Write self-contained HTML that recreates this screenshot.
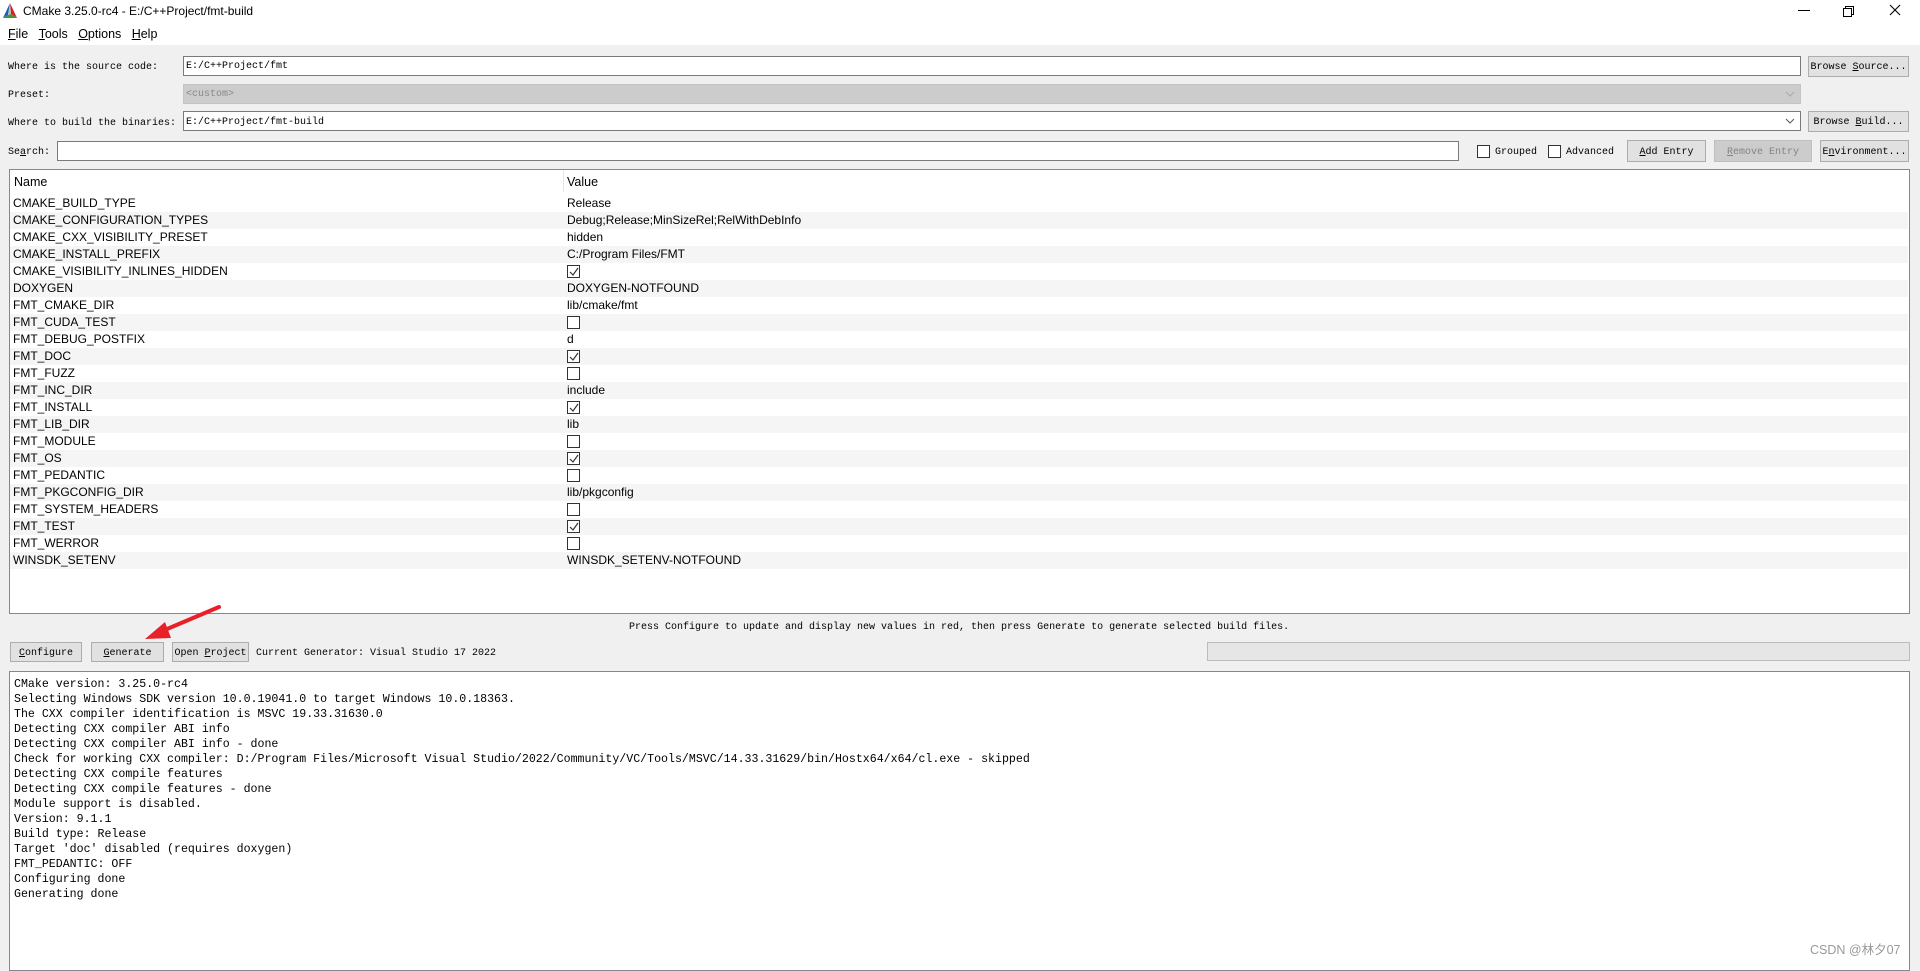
<!DOCTYPE html>
<html><head><meta charset="utf-8"><style>
*{margin:0;padding:0;box-sizing:border-box}
body{width:1920px;height:963px;position:relative;background:#f0f0f0;overflow:hidden;font-family:"Liberation Sans",sans-serif}
.a{position:absolute;white-space:pre}
.m{font-family:"Liberation Mono","Noto Sans CJK SC",monospace;font-size:10px;color:#000}
.inp{position:absolute;background:#fff;border:1px solid #7a7a7a}
.btn{position:absolute;background:#e1e1e1;border:1px solid #adadad;font-family:"Liberation Mono",monospace;font-size:10px;text-align:center;color:#000}
.row{position:absolute;left:10px;width:1898px;height:17px;font-size:12px;line-height:17px;color:#000}
.row.g{background:#f5f5f5}
.row span{position:absolute}
.cb{position:absolute;width:13px;height:13px;border:1px solid #333;background:#fff;top:2px;left:557px}
.cb svg{position:absolute;left:1px;top:1px}
.out{font-family:"Liberation Mono",monospace;font-size:11.6px;line-height:15px;color:#000}
u{text-decoration:underline}
</style></head><body>
<div class="a" style="left:0;top:0;width:1920px;height:45px;background:#fff"></div>
<svg class="a" style="left:2px;top:2px" width="16" height="18" viewBox="0 0 16 18"><polygon points="8,1 1,16 6,13" fill="#1e5fb5"/><polygon points="8,1 15,16 9,12" fill="#d42020"/><polygon points="1,16 15,16 9,12 6,13" fill="#3a9a3a"/><polygon points="6,13 9,12 8,1" fill="#bbb"/></svg>
<div class="a" style="left:23px;top:4px;font-size:12px;color:#000">CMake 3.25.0-rc4 - E:/C++Project/fmt-build</div>
<div class="a" style="left:1798px;top:10px;width:12px;height:1px;background:#000"></div>
<div class="a" style="left:1845px;top:6px;width:9px;height:9px;border:1px solid #000;background:#fff"></div>
<div class="a" style="left:1843px;top:8px;width:9px;height:9px;border:1px solid #000;background:#fff"></div>
<svg class="a" style="left:1889px;top:4px" width="12" height="12"><path d="M1 1L11 11M11 1L1 11" stroke="#000" stroke-width="1.1"/></svg>
<div class="a" style="left:8px;top:27px;font-size:12.5px"><u>F</u>ile&nbsp;&nbsp;&nbsp;<u>T</u>ools&nbsp;&nbsp;&nbsp;<u>O</u>ptions&nbsp;&nbsp;&nbsp;<u>H</u>elp</div>

<div class="a m" style="left:8px;top:62px">Where is the source code:</div>
<div class="inp" style="left:183px;top:56px;width:1618px;height:20px"></div>
<div class="a m" style="left:186px;top:61px">E:/C++Project/fmt</div>
<div class="btn" style="left:1808px;top:56px;width:101px;height:21px;line-height:21px">Browse <u>S</u>ource...</div>

<div class="a m" style="left:8px;top:90px">Preset:</div>
<div class="a" style="left:183px;top:84px;width:1618px;height:20px;background:#cccccc;border:1px solid #c4c4c4"></div>
<div class="a m" style="left:186px;top:89px;color:#888">&lt;custom&gt;</div>
<svg class="a" style="left:1785px;top:91px" width="10" height="6"><path d="M1 1L5 5L9 1" stroke="#aaa" fill="none"/></svg>

<div class="a m" style="left:8px;top:118px">Where to build the binaries:</div>
<div class="inp" style="left:183px;top:111px;width:1618px;height:20px"></div>
<div class="a m" style="left:186px;top:117px">E:/C++Project/fmt-build</div>
<svg class="a" style="left:1785px;top:118px" width="10" height="6"><path d="M1 1L5 5L9 1" stroke="#555" fill="none"/></svg>
<div class="btn" style="left:1808px;top:111px;width:101px;height:21px;line-height:21px">Browse <u>B</u>uild...</div>

<div class="a m" style="left:8px;top:147px">Se<u>a</u>rch:</div>
<div class="inp" style="left:57px;top:141px;width:1402px;height:20px"></div>
<div class="a" style="left:1477px;top:145px;width:13px;height:13px;border:1px solid #333;background:#fff"></div>
<div class="a m" style="left:1495px;top:147px">Grouped</div>
<div class="a" style="left:1548px;top:145px;width:13px;height:13px;border:1px solid #333;background:#fff"></div>
<div class="a m" style="left:1566px;top:147px">Advanced</div>
<div class="btn" style="left:1627px;top:140px;width:79px;height:22px;line-height:23px"><u>A</u>dd Entry</div>
<div class="btn" style="left:1714px;top:140px;width:98px;height:22px;line-height:23px;background:#cccccc;border-color:#bfbfbf;color:#838383"><u>R</u>emove Entry</div>
<div class="btn" style="left:1820px;top:140px;width:89px;height:22px;line-height:23px">E<u>n</u>vironment...</div>

<div class="a" style="left:9px;top:169px;width:1901px;height:445px;background:#fff;border:1px solid #828790"></div>
<div class="a" style="left:14px;top:175px;font-size:12.5px">Name</div>
<div class="a" style="left:563px;top:170px;width:1px;height:22px;background:#e5e5e5"></div>
<div class="a" style="left:567px;top:175px;font-size:12.5px">Value</div>

<div class="row" style="top:195px"><span style="left:3px">CMAKE_BUILD_TYPE</span><span style="left:557px">Release</span></div>
<div class="row g" style="top:212px"><span style="left:3px">CMAKE_CONFIGURATION_TYPES</span><span style="left:557px">Debug;Release;MinSizeRel;RelWithDebInfo</span></div>
<div class="row" style="top:229px"><span style="left:3px">CMAKE_CXX_VISIBILITY_PRESET</span><span style="left:557px">hidden</span></div>
<div class="row g" style="top:246px"><span style="left:3px">CMAKE_INSTALL_PREFIX</span><span style="left:557px">C:/Program Files/FMT</span></div>
<div class="row" style="top:263px"><span style="left:3px">CMAKE_VISIBILITY_INLINES_HIDDEN</span><div class="cb"><svg width="10" height="10"><path d="M1 5L4 8L9 1" stroke="#333" fill="none" stroke-width="1.2"/></svg></div></div>
<div class="row g" style="top:280px"><span style="left:3px">DOXYGEN</span><span style="left:557px">DOXYGEN-NOTFOUND</span></div>
<div class="row" style="top:297px"><span style="left:3px">FMT_CMAKE_DIR</span><span style="left:557px">lib/cmake/fmt</span></div>
<div class="row g" style="top:314px"><span style="left:3px">FMT_CUDA_TEST</span><div class="cb"></div></div>
<div class="row" style="top:331px"><span style="left:3px">FMT_DEBUG_POSTFIX</span><span style="left:557px">d</span></div>
<div class="row g" style="top:348px"><span style="left:3px">FMT_DOC</span><div class="cb"><svg width="10" height="10"><path d="M1 5L4 8L9 1" stroke="#333" fill="none" stroke-width="1.2"/></svg></div></div>
<div class="row" style="top:365px"><span style="left:3px">FMT_FUZZ</span><div class="cb"></div></div>
<div class="row g" style="top:382px"><span style="left:3px">FMT_INC_DIR</span><span style="left:557px">include</span></div>
<div class="row" style="top:399px"><span style="left:3px">FMT_INSTALL</span><div class="cb"><svg width="10" height="10"><path d="M1 5L4 8L9 1" stroke="#333" fill="none" stroke-width="1.2"/></svg></div></div>
<div class="row g" style="top:416px"><span style="left:3px">FMT_LIB_DIR</span><span style="left:557px">lib</span></div>
<div class="row" style="top:433px"><span style="left:3px">FMT_MODULE</span><div class="cb"></div></div>
<div class="row g" style="top:450px"><span style="left:3px">FMT_OS</span><div class="cb"><svg width="10" height="10"><path d="M1 5L4 8L9 1" stroke="#333" fill="none" stroke-width="1.2"/></svg></div></div>
<div class="row" style="top:467px"><span style="left:3px">FMT_PEDANTIC</span><div class="cb"></div></div>
<div class="row g" style="top:484px"><span style="left:3px">FMT_PKGCONFIG_DIR</span><span style="left:557px">lib/pkgconfig</span></div>
<div class="row" style="top:501px"><span style="left:3px">FMT_SYSTEM_HEADERS</span><div class="cb"></div></div>
<div class="row g" style="top:518px"><span style="left:3px">FMT_TEST</span><div class="cb"><svg width="10" height="10"><path d="M1 5L4 8L9 1" stroke="#333" fill="none" stroke-width="1.2"/></svg></div></div>
<div class="row" style="top:535px"><span style="left:3px">FMT_WERROR</span><div class="cb"></div></div>
<div class="row g" style="top:552px"><span style="left:3px">WINSDK_SETENV</span><span style="left:557px">WINSDK_SETENV-NOTFOUND</span></div>

<div class="a m" style="left:629px;top:622px">Press Configure to update and display new values in red, then press Generate to generate selected build files.</div>

<div class="btn" style="left:10px;top:642px;width:72px;height:20px;line-height:22px"><u>C</u>onfigure</div>
<div class="btn" style="left:91px;top:642px;width:73px;height:20px;line-height:22px"><u>G</u>enerate</div>
<div class="btn" style="left:172px;top:642px;width:77px;height:20px;line-height:22px">Open <u>P</u>roject</div>
<div class="a m" style="left:256px;top:648px">Current Generator: Visual Studio 17 2022</div>
<div class="a" style="left:1207px;top:642px;width:703px;height:19px;background:#e6e6e6;border:1px solid #bcbcbc"></div>

<svg class="a" style="left:0;top:0" width="300" height="700"><path d="M219 607L160 632" stroke="#e8202a" stroke-width="4" stroke-linecap="round"/><polygon points="145,639 165,622 171,638" fill="#e8202a"/></svg>

<div class="a" style="left:9px;top:671px;width:1901px;height:300px;background:#fff;border:1px solid #828790"></div>
<div class="a out" style="left:14px;top:677px">CMake version: 3.25.0-rc4
Selecting Windows SDK version 10.0.19041.0 to target Windows 10.0.18363.
The CXX compiler identification is MSVC 19.33.31630.0
Detecting CXX compiler ABI info
Detecting CXX compiler ABI info - done
Check for working CXX compiler: D:/Program Files/Microsoft Visual Studio/2022/Community/VC/Tools/MSVC/14.33.31629/bin/Hostx64/x64/cl.exe - skipped
Detecting CXX compile features
Detecting CXX compile features - done
Module support is disabled.
Version: 9.1.1
Build type: Release
Target 'doc' disabled (requires doxygen)
FMT_PEDANTIC: OFF
Configuring done
Generating done</div>
<div class="a" style="left:1810px;top:939px;font-size:12.5px;color:#999;font-family:'Liberation Sans','Noto Sans CJK SC',sans-serif">CSDN @林夕07</div>
</body></html>
